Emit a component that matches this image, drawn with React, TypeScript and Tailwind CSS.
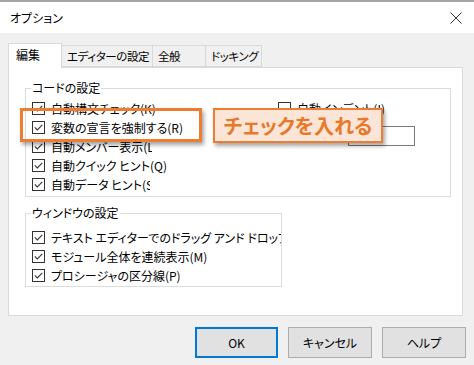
import React from 'react';

function CheckBox({ checked }: { checked?: boolean }) {
  return (
    <span className="w-[13px] h-[13px] border border-[#333333] bg-white shrink-0 flex items-center justify-center">
      {checked && (
        <svg width="11" height="11" viewBox="0 0 11 11">
          <path d="M1.8 5.4 L4.3 7.9 L9.3 2.9" fill="none" stroke="#333333" strokeWidth="1.1" />
        </svg>
      )}
    </span>
  );
}

function Row({ label, checked = true, clip }: { label: string; checked?: boolean; clip?: string }) {
  return (
    <div className="h-[19px] flex items-center gap-[6px]">
      <CheckBox checked={checked} />
      <span className={`whitespace-nowrap overflow-hidden leading-[19px] ${clip ?? ''}`}>{label}</span>
    </div>
  );
}

function Group({ title, className, children }: { title: string; className: string; children: React.ReactNode }) {
  return (
    <div className={`relative border border-[#dcdcdc] ml-[16px] ${className}`}>
      <span className="absolute left-[5px] -top-[9px] bg-white px-[1px] leading-[16px]">{title}</span>
      {children}
    </div>
  );
}

const tabs = [
  { name: 'エディターの設定', w: 'w-[91px]' },
  { name: '全般', w: 'w-[53px]' },
  { name: 'ドッキング', w: 'w-[56px]' },
];

export default function App() {
  return (
    <div className="relative w-[474px] h-[365px] overflow-hidden bg-[#f0f0f0] text-[12px] text-black font-['Noto_Sans_CJK_JP','Noto_Sans',sans-serif] [font-feature-settings:'palt']">
      <div className="h-[2px] bg-[#a3a3a3]" />
      <div className="h-[31px] bg-white flex items-center justify-between pl-[10px] pr-[12px]">
        <span>オプション</span>
        <svg width="12" height="12" viewBox="0 0 12 12">
          <path d="M0.5 0.5 L11.5 11.5 M11.5 0.5 L0.5 11.5" stroke="#333333" strokeWidth="1" />
        </svg>
      </div>

      <div className="px-[8px] pt-[10px]">
        <div className="h-[24px] flex">
          <div className="relative z-10 self-start h-[25px] w-[54px] bg-white border border-b-0 border-[#d9d9d9] pl-[7px] leading-[22px] whitespace-nowrap">
            編集
          </div>
          {tabs.map((t) => (
            <div
              key={t.name}
              className={`self-end h-[22px] ${t.w} border border-l-0 border-[#d9d9d9] bg-[#f0f0f0] pl-[5px] text-[11.5px] tracking-[-0.4px] leading-[21px] whitespace-nowrap overflow-hidden`}
            >
              {t.name}
            </div>
          ))}
        </div>

        <div className="w-[455px] h-[249px] bg-white border border-[#d9d9d9] pt-[20px]">
          <Group title="コードの設定" className="w-[426px] h-[109px] pt-[10px] pl-[6px] flex">
            <div className="w-[246px]">
              <Row label="自動構文チェック(K)" />
              <Row label="変数の宣言を強制する(R)" />
              <Row label="自動メンバー表示(L)" clip="w-[101px]" />
              <Row label="自動クイック ヒント(Q)" />
              <Row label="自動データ ヒント(S)" clip="w-[99px]" />
            </div>
            <div>
              <Row label="自動インデント(I)" checked={false} />
              <div className="flex items-center mt-[8px] gap-[4px]">
                <span className="w-[66px] whitespace-nowrap">タブ間隔(T):</span>
                <span className="w-[67px] h-[20px] border border-[#7a7a7a] bg-white" />
              </div>
            </div>
          </Group>

          <Group title="ウィンドウの設定" className="w-[257px] h-[74px] mt-[16px] pt-[14px] pl-[6px]">
            <Row label="テキスト エディターでのドラッグ アンド ドロップ(D)" clip="w-[230px]" />
            <Row label="モジュール全体を連続表示(M)" />
            <Row label="プロシージャの区分線(P)" />
          </Group>
        </div>
      </div>

      <div className="flex justify-end gap-[10px] pr-[8px] mt-[11px]">
        <button className="w-[83px] h-[31px] bg-[#e1e1e1] border-2 border-[#0078d7] flex items-center justify-center">OK</button>
        <button className="w-[84px] h-[31px] bg-[#e1e1e1] border border-[#adadad] flex items-center justify-center">キャンセル</button>
        <button className="w-[84px] h-[31px] bg-[#e1e1e1] border border-[#adadad] flex items-center justify-center">ヘルプ</button>
      </div>

      <div className="absolute left-[20px] top-[108px] w-[182px] h-[34px] border-[3px] border-[#ed7d31] shadow-[2px_3px_4px_rgba(0,0,0,0.35)]" />
      <div className="absolute left-[213px] top-[108px] w-[170px] h-[35px] bg-[#fbe5d6] border-2 border-[#ed7d31] shadow-[2px_3px_4px_rgba(0,0,0,0.35)] flex items-center justify-center text-[20px] font-bold text-[#e8782a] leading-none">
        チェックを入れる
      </div>
    </div>
  );
}
